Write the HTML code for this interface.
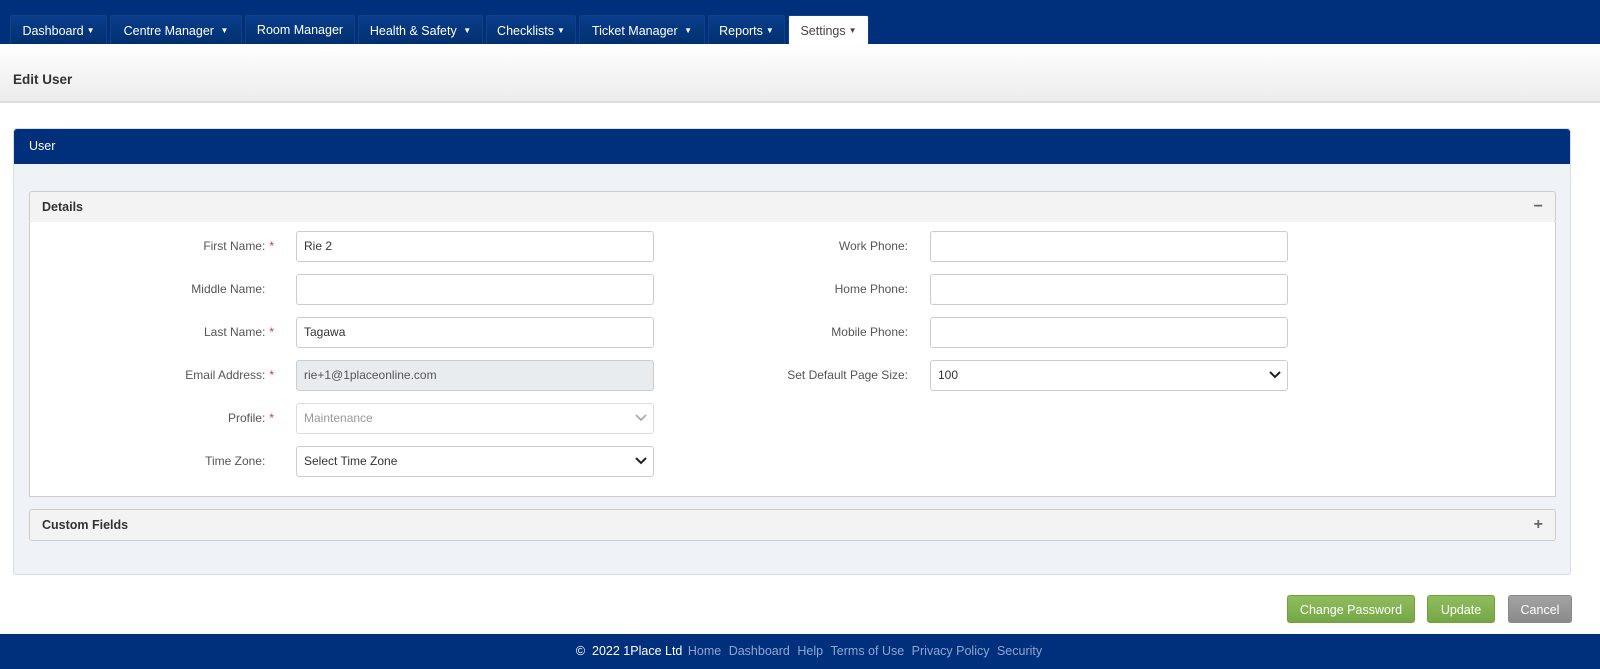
<!DOCTYPE html>
<html><head><meta charset="utf-8"><style>
*{box-sizing:border-box;margin:0;padding:0}
body{width:1600px;height:669px;overflow:hidden;font-family:"Liberation Sans",sans-serif;font-size:12px;color:#333;background:#fff;position:relative}
.nav{position:absolute;left:0;top:0;width:1600px;height:44px;background:#002f7c}
.tab{position:absolute;top:15px;height:29px;background:linear-gradient(#0a3d8c,#00306f);color:#fff;font-size:12.5px;line-height:29px;text-align:center;border-radius:2px 2px 0 0;border:1px solid #13407f;border-bottom:none}
.tab.act{background:#fff;color:#444}
.car{font-size:8px;vertical-align:2px;margin-left:3px}
.hdr{position:absolute;left:0;top:44px;width:1600px;height:59px;background:linear-gradient(#fff,#ececec);border-bottom:2px solid #ddd}
.hdr span{position:absolute;left:13px;top:28px;font-weight:bold;font-size:13.5px;color:#333}
.panel{position:absolute;left:13px;top:128px;width:1558px;height:447px;background:#eff2f7;border:1px solid #d8dde5;border-radius:3px}
.ph{height:35px;background:#002f7c;color:#fff;line-height:35px;padding-left:15px;font-size:12.5px;border-radius:3px 3px 0 0}
.bar{position:absolute;left:29px;width:1527px;height:32px;background:#f3f3f3;border:1px solid #ccc;border-radius:3px;font-weight:bold;font-size:12.5px;line-height:30px;padding-left:12px}
.bar b{position:absolute;right:12px;top:0;font-size:16px;color:#666}
.form{position:absolute;left:29px;top:222px;width:1527px;height:275px;background:#fff;border:1px solid #ccc;border-top:none}
.lab{position:absolute;width:250px;text-align:right;font-size:12px;color:#555;line-height:31px}
.lab i{color:#d33;font-style:normal;margin-left:4px}
.in{position:absolute;width:358px;height:31px;border:1px solid #ccc;border-radius:3px;background:#fff;line-height:29px;padding-left:7px;font-size:12px;color:#333}
.in.dis{background:#e9ecef}
.in svg{position:absolute;right:6px;top:9px}
.btn{position:absolute;top:595px;height:28px;line-height:28px;color:#fff;text-align:center;font-size:12.5px;border-radius:3px;background:linear-gradient(#8fbd5d,#76a746);border:1px solid #70a040}
.foot{position:absolute;left:0;top:634px;width:1600px;height:35px;background:#002f7c;text-align:center;line-height:35px;font-size:12.5px;color:#8fa6d0;padding-left:20px}
.foot b{color:#fff;font-weight:normal}
.foot span{margin:0 2px}
</style></head><body>
<div class="nav">
<div class="tab" style="left:10px;width:97px">Dashboard<span class="car">▼</span></div>
<div class="tab" style="left:110px;width:132px">Centre Manager <span class="car">▼</span></div>
<div class="tab" style="left:245px;width:110px">Room Manager</div>
<div class="tab" style="left:358px;width:125px">Health &amp; Safety <span class="car">▼</span></div>
<div class="tab" style="left:486px;width:90px">Checklists<span class="car">▼</span></div>
<div class="tab" style="left:579px;width:126px">Ticket Manager <span class="car">▼</span></div>
<div class="tab" style="left:708px;width:77px">Reports<span class="car">▼</span></div>
<div class="tab act" style="left:788px;width:81px">Settings<span class="car">▼</span></div>
</div>
<div class="hdr"><span>Edit User</span></div>
<div class="panel"><div class="ph">User</div></div>
<div class="bar" style="top:191px">Details<b>−</b></div>
<div class="form"></div>
<div class="lab" style="left:24px;top:231px">First Name:<i>*</i></div>
<div class="in" style="left:296px;top:231px">Rie 2</div>
<div class="lab" style="left:24px;top:274px">Middle Name:<i style="visibility:hidden">*</i></div>
<div class="in" style="left:296px;top:274px"></div>
<div class="lab" style="left:24px;top:317px">Last Name:<i>*</i></div>
<div class="in" style="left:296px;top:317px">Tagawa</div>
<div class="lab" style="left:24px;top:360px">Email Address:<i>*</i></div>
<div class="in dis" style="left:296px;top:360px;color:#555">rie+1@1placeonline.com</div>
<div class="lab" style="left:24px;top:403px">Profile:<i>*</i></div>
<div class="in" style="left:296px;top:403px;color:#999;border-color:#ddd">Maintenance<svg width="12" height="10"><path d="M1 2l5 5 5-5" stroke="#aaa" stroke-width="1.8" fill="none"/></svg></div>
<div class="lab" style="left:24px;top:446px">Time Zone:<i style="visibility:hidden">*</i></div>
<div class="in" style="left:296px;top:446px">Select Time Zone<svg width="12" height="10"><path d="M1 2l5 5 5-5" stroke="#222" stroke-width="2" fill="none"/></svg></div>
<div class="lab" style="left:658px;top:231px">Work Phone:</div>
<div class="in" style="left:930px;top:231px"></div>
<div class="lab" style="left:658px;top:274px">Home Phone:</div>
<div class="in" style="left:930px;top:274px"></div>
<div class="lab" style="left:658px;top:317px">Mobile Phone:</div>
<div class="in" style="left:930px;top:317px"></div>
<div class="lab" style="left:658px;top:360px">Set Default Page Size:</div>
<div class="in" style="left:930px;top:360px">100<svg width="12" height="10"><path d="M1 2l5 5 5-5" stroke="#222" stroke-width="2" fill="none"/></svg></div>
<div class="bar" style="top:509px">Custom Fields<b>+</b></div>
<div class="btn" style="left:1287px;width:128px">Change Password</div>
<div class="btn" style="left:1427px;width:68px">Update</div>
<div class="btn" style="left:1508px;width:64px;background:linear-gradient(#a3a3a3,#8a8a8a);border-color:#888">Cancel</div>
<div class="foot"><b>©&nbsp; 2022 1Place Ltd</b> <span>Home</span> <span>Dashboard</span> <span>Help</span> <span>Terms of Use</span> <span>Privacy Policy</span> <span>Security</span></div>
</body></html>
